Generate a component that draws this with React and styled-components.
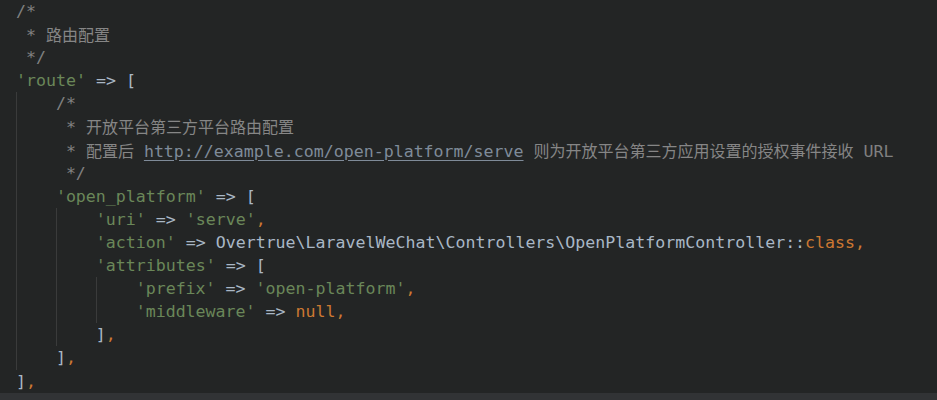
import React from 'react'
import styled, { createGlobalStyle } from 'styled-components'

const Global = createGlobalStyle`
    html, body { margin: 0; padding: 0; background: #232525; }
    #root { width: 937px; height: 400px; overflow: hidden; }
`;

const colors = {
    c: '#808080',
    z: '#868686',
    s: '#6A8759',
    o: '#A9B7C6',
    p: '#CC7832',
    k: '#CC7832',
    l: '#7F8B99',
};

const lines = [
    { indent: 0, tokens: [['c', '/*']] },
    { indent: 0, tokens: [['c', ' * '], ['z', '路由配置']] },
    { indent: 0, tokens: [['c', ' */']] },
    { indent: 0, tokens: [['s', "'route'"], ['o', ' => [']] },
    { indent: 1, tokens: [['c', '/*']] },
    { indent: 1, tokens: [['c', ' * '], ['z', '开放平台第三方平台路由配置']] },
    { indent: 1, tokens: [['c', ' * '], ['z', '配置后'], ['c', ' '], ['l', 'http://example.com/open-platform/serve'], ['c', ' '], ['z', '则为开放平台第三方应用设置的授权事件接收'], ['c', ' URL']] },
    { indent: 1, tokens: [['c', ' */']] },
    { indent: 1, tokens: [['s', "'open_platform'"], ['o', ' => [']] },
    { indent: 2, tokens: [['s', "'uri'"], ['o', ' => '], ['s', "'serve'"], ['p', ',']] },
    { indent: 2, tokens: [['s', "'action'"], ['o', ' => Overtrue\\LaravelWeChat\\Controllers\\OpenPlatformController::'], ['k', 'class'], ['p', ',']] },
    { indent: 2, tokens: [['s', "'attributes'"], ['o', ' => [']] },
    { indent: 3, tokens: [['s', "'prefix'"], ['o', ' => '], ['s', "'open-platform'"], ['p', ',']] },
    { indent: 3, tokens: [['s', "'middleware'"], ['o', ' => '], ['k', 'null'], ['p', ',']] },
    { indent: 2, tokens: [['o', ']'], ['p', ',']] },
    { indent: 1, tokens: [['o', ']'], ['p', ',']] },
    { indent: 0, tokens: [['o', ']'], ['p', ',']] },
];

const App = () => (
    <>
        <Global />
        <Window>
            <Editor>
                {lines.map((line, i) =>
                    <Line key={i}>
                        {Array.from({ length: line.indent }).map((_, j) =>
                            <Indent key={j} />
                        )}
                        <Code>
                            {line.tokens.map(([kind, text], j) =>
                                <Token key={j} kind={kind}>{text}</Token>
                            )}
                        </Code>
                    </Line>
                )}
            </Editor>
            <StatusStrip />
        </Window>
    </>
)
export default App;

const Window = styled.div`
    display: flex;
    flex-direction: column;
    width: 937px;
    height: 400px;
    background: #232525;
`;

const Editor = styled.div`
    flex: 1;
    display: flex;
    flex-direction: column;
    padding-left: 16px;
    font-family: "DejaVu Sans Mono", "Noto Sans CJK SC", monospace;
    font-size: 16.6px;
`;

const Line = styled.div`
    display: flex;
    height: 23.1px;
    line-height: 23.1px;
`;

const Indent = styled.span`
    flex: none;
    width: 39.9px;
    border-left: 1px solid #3a3b3b;
    box-sizing: border-box;
`;

const Code = styled.span`
    white-space: pre;
`;

const Token = styled.span`
    color: ${({ kind }) => colors[kind]};
    ${({ kind }) => kind === 'z' && `
        font-family: "Noto Sans CJK SC", sans-serif;
        font-size: 16px;
    `}
    ${({ kind }) => kind === 'l' && `
        text-decoration: underline;
        text-underline-offset: 3px;
    `}
`;

const StatusStrip = styled.div`
    height: 9px;
    background: #313335;
`;
